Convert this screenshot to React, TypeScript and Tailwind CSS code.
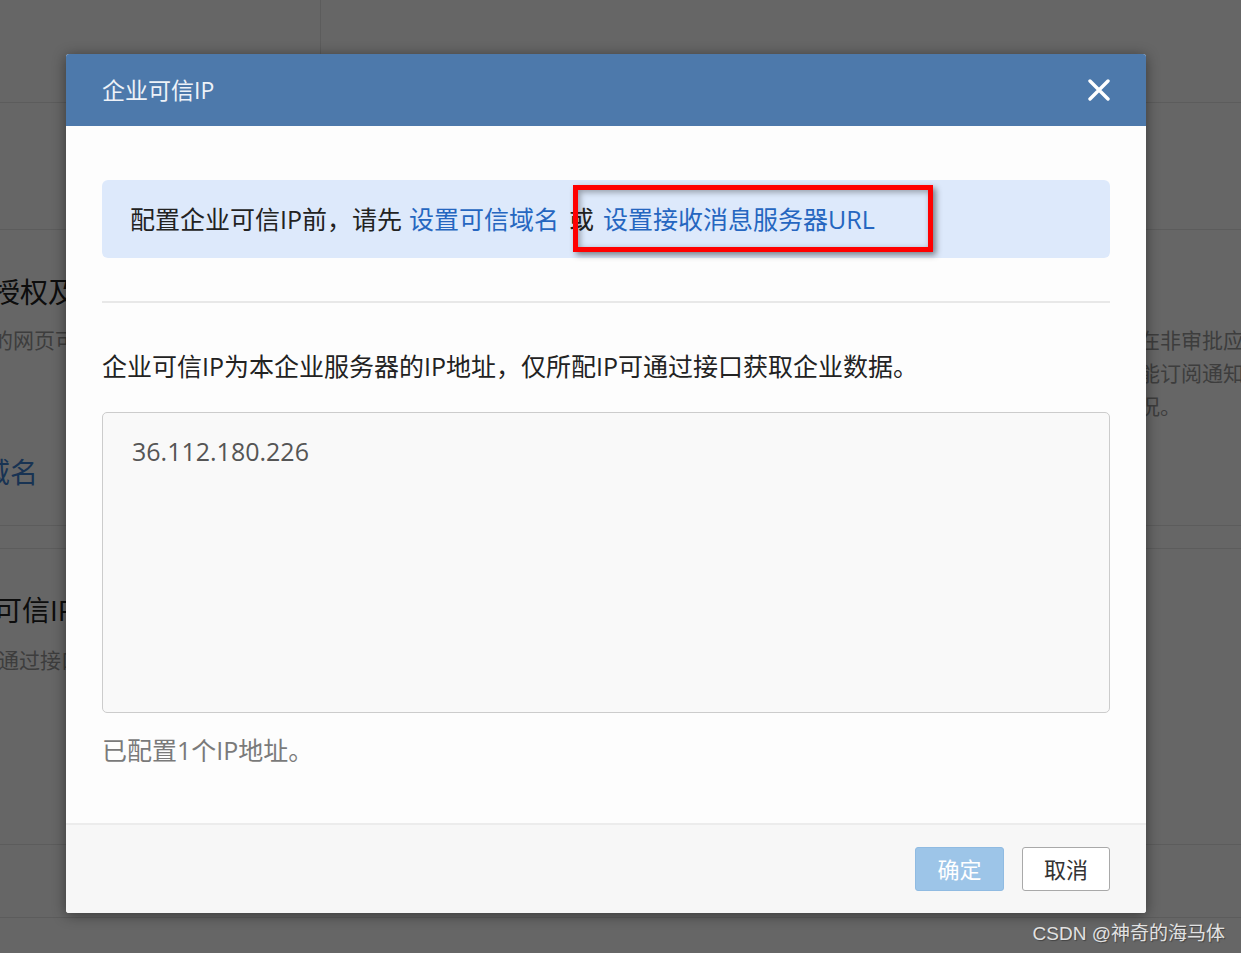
import React from "react";

export default function App() {
  return (
    <div className="relative w-[1241px] h-[953px] overflow-hidden bg-white font-['Open_Sans','Noto_Sans_CJK_SC',sans-serif]">
      {/* underlying page */}
      <div className="flex flex-col w-full">
        <div className="h-[103px] border-b border-[#e6e6e6] flex">
          <div className="w-[321px] border-r border-[#e6e6e6] overflow-hidden">
            <div className="mt-[-27px] ml-[-4px] text-[20px] leading-[30px] text-[#222]">设置</div>
          </div>
          <div className="flex-1" />
        </div>
        <div className="h-[127px] border-b border-[#e6e6e6]" />
        <div className="h-[296px] border-b border-[#e6e6e6] flex justify-between">
          <div className="ml-[-8px] pt-[42px] flex flex-col">
            <div className="text-[28px] leading-[40px] text-[#222]">授权及回调</div>
            <div className="mt-[13px] text-[21px] leading-[30px] text-[#999]">的网页可</div>
            <div className="mt-[97px] ml-[-10px] text-[28px] leading-[40px] text-[#3d7fd0]">域名</div>
          </div>
          <div className="w-[102px] pt-[94px] overflow-hidden whitespace-nowrap text-[21px] leading-[33px] text-[#999]">
            <div>在非审批应用</div>
            <div>能订阅通知</div>
            <div>况。</div>
          </div>
        </div>
        <div className="h-[23px] border-b border-[#e6e6e6]" />
        <div className="h-[296px] border-b border-[#e6e6e6] flex flex-col ml-[-6px] pt-[41px]">
          <div className="text-[28px] leading-[40px] text-[#222]">可信IP</div>
          <div className="mt-[15px] ml-[4px] text-[21px] leading-[30px] text-[#999]">通过接口</div>
        </div>
        <div className="h-[73px] border-b border-[#e6e6e6]" />
      </div>

      {/* overlay */}
      <div className="absolute inset-0 bg-black/60" />

      {/* modal */}
      <div className="absolute left-[66px] top-[54px] w-[1080px] h-[859px] rounded-[3px] overflow-hidden flex flex-col bg-[#fdfdfd] shadow-[0_2px_14px_rgba(0,0,0,0.45)]">
        <div className="h-[72px] shrink-0 bg-[#4d79ab] flex items-center justify-between px-[36px]">
          <div className="text-[23px] leading-[30px] text-[#eef2f8]">企业可信IP</div>
          <svg width="22" height="22" viewBox="0 0 22 22">
            <path d="M2 2 L20 20 M20 2 L2 20" stroke="#ffffff" strokeWidth="3.4" strokeLinecap="round" />
          </svg>
        </div>

        <div className="flex-1 px-[36px] pt-[54px] flex flex-col">
          <div className="relative h-[78px] rounded-[6px] bg-[#dde9fb] flex items-center pl-[28px] text-[25px] leading-[36px] text-[#222]">
            <span>配置企业可信IP前，请先</span>
            <span className="ml-[7px] text-[#2566c0]">设置可信域名</span>
            <span className="ml-[10px]">或</span>
            <span className="ml-[9px] text-[#2566c0]">设置接收消息服务器URL</span>
            <div className="absolute left-[471px] top-[5px] w-[360px] h-[67px] border-[5px] border-[#ff0000] shadow-[3px_3px_6px_rgba(0,0,0,0.45),inset_2px_2px_6px_rgba(0,0,0,0.35)]" />
          </div>

          <div className="mt-[43px] h-[2px] bg-[#e8e8e8]" />

          <div className="mt-[45px] text-[25px] leading-[36px] text-[#222]">
            企业可信IP为本企业服务器的IP地址，仅所配IP可通过接口获取企业数据。
          </div>

          <div className="mt-[28px] h-[301px] rounded-[5px] border border-[#cccccc] bg-[#f9f9f9] pl-[29px] pt-[20px]">
            <div className="text-[25px] leading-[36px] text-[#555]">36.112.180.226</div>
          </div>

          <div className="mt-[19px] text-[25px] leading-[36px] text-[#7a7a7a]">已配置1个IP地址。</div>
        </div>

        <div className="h-[90px] shrink-0 border-t-2 border-[#ececec] bg-[#f7f7f7] flex items-center justify-end gap-[18px] px-[36px]">
          <div className="w-[89px] h-[44px] rounded-[3px] bg-[#9dc5e8] border border-[#90bbe2] flex items-center justify-center text-[22px] text-white">
            确定
          </div>
          <div className="w-[88px] h-[44px] rounded-[3px] bg-white border border-[#a9a9a9] flex items-center justify-center text-[22px] text-[#333]">
            取消
          </div>
        </div>
      </div>

      {/* watermark */}
      <div className="absolute right-[16px] bottom-[6px] text-[19px] leading-[26px] text-[#e2e2e2] font-['Liberation_Sans','Noto_Sans_CJK_SC',sans-serif] [text-shadow:1px_1px_1px_rgba(0,0,0,0.35)]">
        CSDN @神奇的海马体
      </div>
    </div>
  );
}
